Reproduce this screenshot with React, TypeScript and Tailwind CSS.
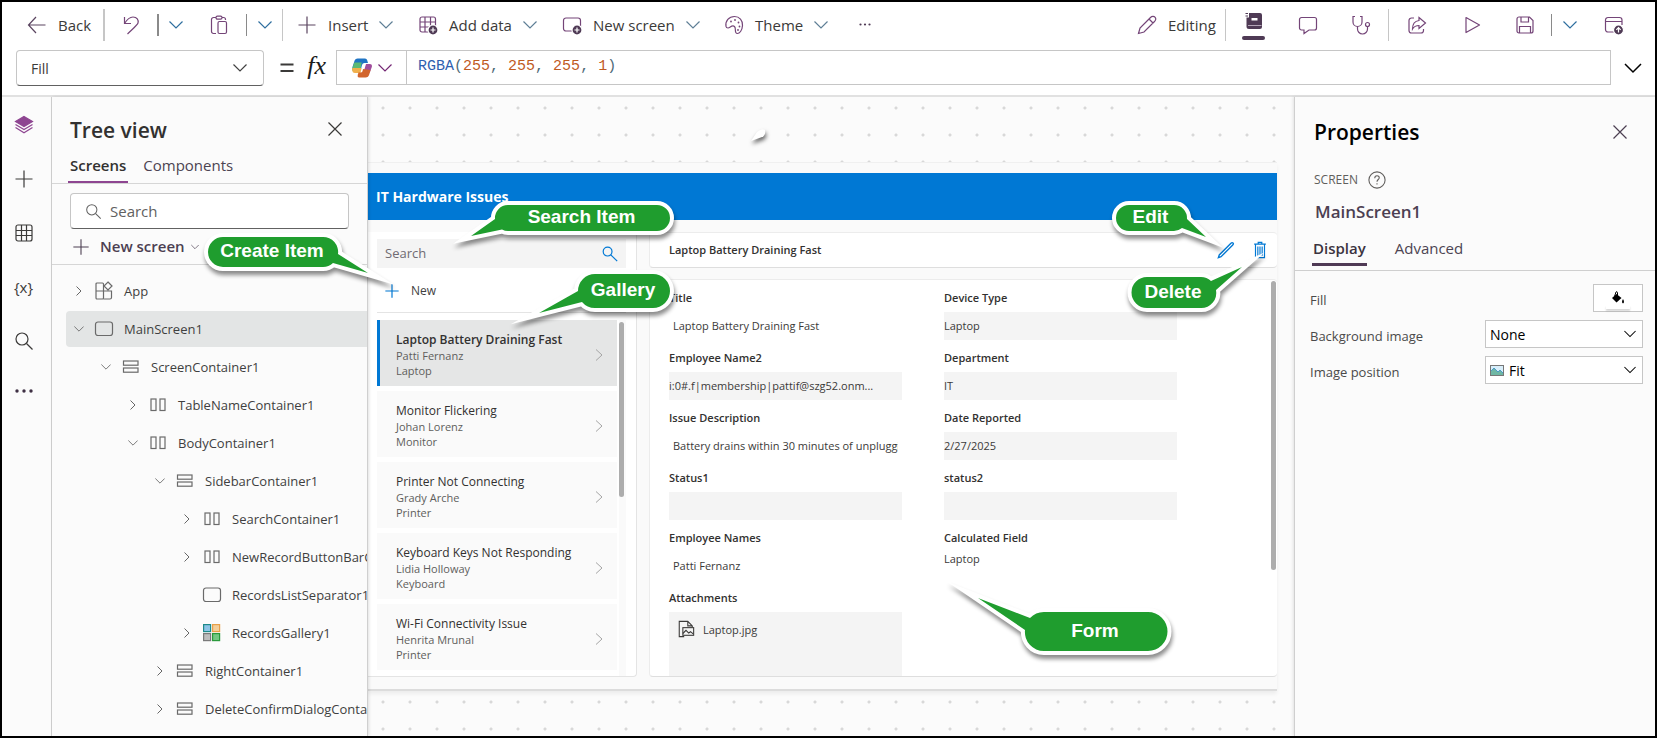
import type { ReactNode } from "react";

type IconProps = { children: ReactNode; className?: string; box?: string };

function Icon({ children, className = "size-5", box = "0 0 20 20" }: IconProps) {
  return (
    <svg viewBox={box} className={`shrink-0 ${className}`} fill="none" stroke="currentColor" strokeWidth="1.2" aria-hidden="true">
      {children}
    </svg>
  );
}

function ChevronDown({ className = "size-3.5" }: { className?: string }) {
  return (
    <Icon box="0 0 14 14" className={className}>
      <path d="M0.500 3.500L7 10L13.500 3.500" />
    </Icon>
  );
}

const plus = <path d="M10 1.500V18.500M1.500 10H18.500" />;
const close = <path d="M3.500 3.500L16.500 16.500M16.500 3.500L3.500 16.500" />;
const magnifier = (
  <>
    <circle cx="8" cy="8" r="6" />
    <path d="M12.500 12.500L18.500 18.500" />
  </>
);

function Separator({ className }: { className: string }) {
  return <span className={`shrink-0 ${className}`} />;
}

function CommandButton({ label, icon, className }: { label: string; icon: ReactNode; className: string }) {
  return (
    <button className={`flex h-full shrink-0 items-center gap-[11px] whitespace-nowrap px-3.5 ${className}`}>
      <span className="text-[#744578]">{icon}</span>
      {label}
      <ChevronDown className="ml-auto size-3.5 text-[#5f7f96]" />
    </button>
  );
}

function IconButton({ label, children, className }: { label: string; children: ReactNode; className: string }) {
  return (
    <button aria-label={label} className={`flex h-full shrink-0 items-center justify-center text-[#744578] ${className}`}>
      {children}
    </button>
  );
}

function Toolbar() {
  return (
    <header className="flex h-12 shrink-0 items-center pb-0.5 text-[15px] text-[#3b3a39]">
      <button className="flex h-full w-[101px] shrink-0 items-center gap-[11px] pl-[25px]">
        <Icon className="size-5 text-[#5b4560]">
          <path d="M18.500 10H1.500M9 2L1.500 10L9 18" />
        </Icon>
        Back
      </button>
      <Separator className="h-8 w-0.5 bg-[#c6c6c6]" />
      <IconButton label="Undo" className="w-[52px]">
        <Icon>
          <path d="M3.500 2V8.500H10M3.500 8.500C6 4.500 8.500 2 12 2C16 2 17.800 5 17 8C16.500 10 11 14.500 6.500 19" />
        </Icon>
      </IconButton>
      <Separator className="h-[22px] w-0.5 bg-[#8a8a8a]" />
      <IconButton label="Undo options" className="w-[33px]">
        <ChevronDown className="size-3.5 text-[#2f6f9f]" />
      </IconButton>
      <IconButton label="Paste" className="w-[54px]">
        <Icon>
          <path d="M7 18.500H4.500A2 2 0 0 1 2.500 16.500V4.500A2 2 0 0 1 4.500 2.500H7M13 2.500H14.500A2 2 0 0 1 16.500 4.500V5" />
          <rect x="7" y="1.200" width="6" height="3" rx="1.400" />
          <rect x="9" y="6.500" width="8.500" height="12" rx="1.500" />
        </Icon>
      </IconButton>
      <Separator className="h-[22px] w-px bg-[#8a8a8a]" />
      <IconButton label="Paste options" className="w-[35px]">
        <ChevronDown className="size-3.5 text-[#2f6f9f]" />
      </IconButton>
      <Separator className="h-8 w-px bg-[#c6c6c6]" />
      <CommandButton label="Insert" className="w-[119px]" icon={<Icon className="size-5 text-[#5b4560]">{plus}</Icon>} />
      <CommandButton
        label="Add data"
        className="ml-0.5 w-[142px]"
        icon={
          <Icon>
            <rect x="2" y="2" width="15.500" height="15" rx="2" />
            <path d="M7 2V17M12.500 2V17M2 7H17.500M2 12H17.500" />
            <circle cx="15" cy="15" r="5" fill="#4f3a55" stroke="#fff" />
            <path d="M15 12.500V17.500M12.500 15H17.500" stroke="#fff" />
          </Icon>
        }
      />
      <CommandButton
        label="New screen"
        className="ml-0.5 w-[158px]"
        icon={
          <Icon>
            <rect x="1.500" y="3" width="17" height="13" rx="2.500" />
            <circle cx="15" cy="15" r="5" fill="#4f3a55" stroke="#fff" />
            <path d="M15 12.500V17.500M12.500 15H17.500" stroke="#fff" />
          </Icon>
        }
      />
      <CommandButton
        label="Theme"
        className="ml-1 w-[127px]"
        icon={
          <Icon>
            <path d="M2 11.500C1 6 5 1.500 10.500 1.500C15.500 1.500 18.800 5.500 18.500 10.500C18.200 15.500 15.500 18.800 13 18.500C10 18 12.500 13.500 10.500 11.500C8 9.500 6 13 4 13C3 13 2.200 12.500 2 11.500Z" />
            <g fill="currentColor" stroke="none">
              <circle cx="7" cy="6.500" r="0.900" />
              <circle cx="11" cy="5" r="0.900" />
              <circle cx="14.500" cy="7.500" r="0.900" />
              <circle cx="15.500" cy="11.500" r="0.900" />
              <circle cx="14" cy="15" r="0.900" />
            </g>
          </Icon>
        }
      />
      <IconButton label="More commands" className="w-14">
        <Icon>
          <g fill="#4f3a55" stroke="none">
            <circle cx="5.500" cy="9.500" r="1.100" />
            <circle cx="10" cy="9.500" r="1.100" />
            <circle cx="14.500" cy="9.500" r="1.100" />
          </g>
        </Icon>
      </IconButton>

      <button className="ml-auto flex h-full w-[102px] shrink-0 items-center gap-[11px] pl-3.5">
        <Icon className="size-5 text-[#744578]">
          <path d="M1.500 18.500L3 13L13.500 2.500C15 1 17 1 18 2.200C19.200 3.300 19 5 17.500 6.500L7 17L1.500 18.500ZM12 4L16 8" />
        </Icon>
        Editing
      </button>
      <Separator className="h-8 w-px bg-[#c6c6c6]" />
      <IconButton label="Properties pane" className="w-[55px]">
        <span className="flex flex-col items-center gap-[5px]">
          <Icon>
            <path d="M5 2H16A2 2 0 0 1 18 4V16A2 2 0 0 1 16 18H5A2.500 2.500 0 0 1 2.500 15.500V6.500H5Z" fill="#4f3a55" stroke="none" />
            <path d="M1.500 2.500H4M1.500 5H4" stroke="#4f3a55" />
            <rect x="7.500" y="7" width="6" height="2.500" fill="#fff" stroke="none" />
            <path d="M4 14.500H17.500" stroke="#cdbfd0" strokeWidth="0.800" />
          </Icon>
          <span className="h-1 w-[23px] rounded-full bg-[#4f3a55]" />
        </span>
      </IconButton>
      <IconButton label="Comments" className="w-[53px]">
        <Icon>
          <path d="M3.500 2.500H16.500A2 2 0 0 1 18.500 4.500V13A2 2 0 0 1 16.500 15H11L6 18.500V15H3.500A2 2 0 0 1 1.500 13V4.500A2 2 0 0 1 3.500 2.500Z" />
        </Icon>
      </IconButton>
      <IconButton label="App checker" className="w-[54px]">
        <Icon>
          <path d="M4 1.500H2V7A4.500 4.500 0 0 0 11 7V1.500H9M6.500 11.500V14A5 5 0 0 0 16.500 14V11.500" />
          <circle cx="16.500" cy="9.500" r="2" />
        </Icon>
      </IconButton>
      <Separator className="h-8 w-px bg-[#c6c6c6]" />
      <IconButton label="Share" className="w-[55px]">
        <Icon>
          <path d="M7 3H4.500A2.500 2.500 0 0 0 2 5.500V15.500A2.500 2.500 0 0 0 4.500 18H14A2.500 2.500 0 0 0 16.500 15.500V14" />
          <path d="M12 2.500L18.500 8L12 13.500V10.500C9 10.500 7 11.500 5.500 14C5.500 9 8 6 12 5.500Z" />
        </Icon>
      </IconButton>
      <IconButton label="Preview" className="w-[55px]">
        <Icon>
          <path d="M4 2.500L17.500 10L4 17.500Z" strokeLinejoin="round" />
        </Icon>
      </IconButton>
      <IconButton label="Save" className="w-[52px]">
        <Icon>
          <path d="M4 2H14.500L18 5.500V16A2 2 0 0 1 16 18H4A2 2 0 0 1 2 16V4A2 2 0 0 1 4 2ZM6 2V7H13.500V2M4.500 18V11.500H15.500V18" />
        </Icon>
      </IconButton>
      <Separator className="h-[22px] w-px bg-[#8a8a8a]" />
      <IconButton label="Save options" className="w-9">
        <ChevronDown className="size-3.5 text-[#2f6f9f]" />
      </IconButton>
      <IconButton label="Publish" className="mr-[15px] w-[52px]">
        <Icon>
          <path d="M10 17H4A2.500 2.500 0 0 1 1.500 14.500V5A2.500 2.500 0 0 1 4 2.500H15.500A2.500 2.500 0 0 1 18 5V10M1.500 6.500H18" />
          <circle cx="14.500" cy="15" r="5" fill="#4f3a55" stroke="#fff" />
          <path d="M14.500 17.500V12.700M12.300 14.800L14.500 12.600L16.700 14.800" stroke="#fff" />
        </Icon>
      </IconButton>
    </header>
  );
}

function FormulaBar() {
  return (
    <div className="flex h-[47px] shrink-0 items-start border-b-2 border-[#e1e1e1] pl-3.5">
      <div className="grid h-9 w-[248px] shrink-0 items-center rounded-[4px] border border-[#c6c6c6] border-b-[#616161]">
        <select aria-label="Property" className="col-start-1 row-start-1 h-full w-full appearance-none bg-transparent px-3.5 text-[14px] text-[#3b3a39]">
          <option>Fill</option>
        </select>
        <ChevronDown className="pointer-events-none col-start-1 row-start-1 mr-4 size-3.5 justify-self-end text-[#424242]" />
      </div>
      <span className="flex h-9 w-[72px] shrink-0 items-center justify-between pl-4 pr-2.5">
        <svg viewBox="0 0 14 10" className="h-2.5 w-3.5" aria-hidden="true">
          <path d="M0.500 1.500H13.500M0.500 8H13.500" stroke="#3b3a39" strokeWidth="2" />
        </svg>
        <i className="pb-1 font-['Liberation_Serif',serif] text-[26px] leading-6 text-[#1b1b1b]">fx</i>
      </span>
      <div className="flex h-[35px] min-w-0 flex-1 items-center border border-[#c6c6c6]">
        <button aria-label="Copilot" className="flex h-full w-[70px] shrink-0 items-center justify-center gap-1.5 border-r border-[#c6c6c6]">
          <svg viewBox="0 0 20 20" className="size-5" aria-hidden="true">
            <path d="M5.500 0.500H13Q14.800 0.500 15.300 2.500L16 5H12.500Q10.500 5 10 7L9 11H1Q0 11 0.500 9L2.600 2.500Q3.500 0.500 5.500 0.500Z" fill="#1f74c4" />
            <path d="M2.300 4.500H9.700L8 13.500H2Q-0.300 13.500 0.300 10.500Z" fill="#5bb974" />
            <path d="M0.300 10H9.500L8.500 15H3Q-0.300 15 0.300 10Z" fill="#f0b04c" />
            <path d="M14 6H18Q20.500 6 19.800 9L18 14Q17 16 15 16H11Z" fill="#a04d9c" />
            <path d="M11 11L18.500 12L17.400 16Q16.500 19.500 13.500 19.500H7Q5.200 19.500 5.700 17L6.500 14.500H9Q10.500 14.500 11 11Z" fill="#d2652c" />
          </svg>
          <ChevronDown className="size-3.5 text-[#742774]" />
        </button>
        <code className="px-[11px] font-['Liberation_Mono',monospace] text-[15px] text-[#4f6b78]">
          <span className="text-[#2f5fb0]">RGBA</span>(<span className="text-[#bf5a1f]">255</span>, <span className="text-[#bf5a1f]">255</span>,{" "}
          <span className="text-[#bf5a1f]">255</span>, <span className="text-[#bf5a1f]">1</span>)
        </code>
      </div>
      <button aria-label="Expand formula bar" className="flex h-9 w-11 shrink-0 items-center justify-center text-black">
        <Icon box="0 0 18 14" className="h-3.5 w-[18px]">
          <path d="M1 3L9 11L17 3" strokeWidth="1.500" />
        </Icon>
      </button>
    </div>
  );
}

function Rail() {
  return (
    <nav className="flex w-[50px] shrink-0 flex-col items-center gap-[34px] border-r border-[#d1d1d1] pr-1.5 pt-[18px] text-[#3b3a39]">
      <button aria-label="Tree view">
        <Icon>
          <path d="M10 1.500L18.500 6.500L10 11.500L1.500 6.500Z" fill="#8e4591" stroke="#8e4591" />
          <path d="M1.500 9.500L10 14.500L18.500 9.500M1.500 12.500L10 17.800L18.500 12.500" stroke="#8e4591" />
        </Icon>
      </button>
      <button aria-label="Insert">
        <Icon>{plus}</Icon>
      </button>
      <button aria-label="Data">
        <Icon>
          <rect x="2" y="2" width="16" height="16" rx="2" />
          <path d="M7.500 2V18M12.500 2V18M2 7.500H18M2 12.500H18" />
        </Icon>
      </button>
      <button aria-label="Variables" className="h-5 text-[15px] leading-4">
        {"{x}"}
      </button>
      <button aria-label="Search">
        <Icon>{magnifier}</Icon>
      </button>
      <button aria-label="More">
        <Icon>
          <g fill="#3f3044" stroke="none">
            <circle cx="3" cy="6" r="1.700" />
            <circle cx="10" cy="6" r="1.700" />
            <circle cx="17" cy="6" r="1.700" />
          </g>
        </Icon>
      </button>
    </nav>
  );
}

type NodeIcon = "app" | "screen" | "vertical" | "horizontal" | "gallery";

const nodeIcons: Record<NodeIcon, ReactNode> = {
  app: (
    <>
      <rect x="2" y="2" width="7.500" height="16" rx="1" />
      <path d="M2 10H17.500V16.500A1.500 1.500 0 0 1 16 18H9.500M14 1L18 5L14 9L10 5Z" />
    </>
  ),
  screen: <rect x="1.500" y="3" width="17" height="13.500" rx="2.500" />,
  vertical: (
    <>
      <rect x="2.500" y="4" width="14.500" height="4.200" />
      <rect x="2.500" y="11" width="14.500" height="4.200" />
    </>
  ),
  horizontal: (
    <>
      <rect x="3" y="4" width="5" height="11.500" />
      <rect x="12" y="4" width="5" height="11.500" />
    </>
  ),
  gallery: (
    <>
      <rect x="1.600" y="1.600" width="7" height="7" fill="#8cc4e6" stroke="#1e8a8a" />
      <rect x="10.600" y="1.600" width="7" height="7" fill="#f3cf9b" stroke="#e8a049" />
      <rect x="1.600" y="10.600" width="7" height="7" fill="#bdbdbd" stroke="#7a7a7a" />
      <rect x="10.600" y="10.600" width="7" height="7" fill="#74c783" stroke="#2a9a3c" />
    </>
  ),
};

type TreeNode = { name: string; icon: NodeIcon; indent: string; state: "open" | "closed" | "leaf"; selected?: boolean };

const nodes: TreeNode[] = [
  { name: "App", icon: "app", indent: "pl-1.5", state: "closed" },
  { name: "MainScreen1", icon: "screen", indent: "pl-1.5", state: "open", selected: true },
  { name: "ScreenContainer1", icon: "vertical", indent: "pl-[33px]", state: "open" },
  { name: "TableNameContainer1", icon: "horizontal", indent: "pl-[60px]", state: "closed" },
  { name: "BodyContainer1", icon: "horizontal", indent: "pl-[60px]", state: "open" },
  { name: "SidebarContainer1", icon: "vertical", indent: "pl-[87px]", state: "open" },
  { name: "SearchContainer1", icon: "horizontal", indent: "pl-[114px]", state: "closed" },
  { name: "NewRecordButtonBarContainer1", icon: "horizontal", indent: "pl-[114px]", state: "closed" },
  { name: "RecordsListSeparator1", icon: "screen", indent: "pl-[114px]", state: "leaf" },
  { name: "RecordsGallery1", icon: "gallery", indent: "pl-[114px]", state: "closed" },
  { name: "RightContainer1", icon: "vertical", indent: "pl-[87px]", state: "closed" },
  { name: "DeleteConfirmDialogContainer1", icon: "vertical", indent: "pl-[87px]", state: "closed" },
];

function TreeView() {
  return (
    <aside className="z-10 flex w-[316px] shrink-0 flex-col overflow-hidden border-r border-[#cfcfcf] bg-[#fbfbfb] shadow-[1px_0_3px_rgba(0,0,0,0.12)]">
      <div className="flex h-[54px] items-end justify-between pb-1.5 pl-[18px] pr-[22px]">
        <h2 className="text-[21px] font-semibold leading-[30px] text-[#323130]">Tree view</h2>
        <button aria-label="Close tree view" className="mb-1.5 text-[#3b3a39]">
          <Icon>{close}</Icon>
        </button>
      </div>
      <div className="flex h-[33px] items-stretch gap-[15px] border-b border-[#d6d6d6] pl-4 text-[15px] text-[#4c4452]">
        <button className="border-b-2 border-[#8e4591] px-0.5 pb-0.5 font-semibold text-[#323130]">Screens</button>
        <button className="border-b-2 border-transparent pb-0.5">Components</button>
      </div>
      <label className="mx-[18px] mt-[9px] flex h-9 items-center gap-2 rounded-[4px] border border-[#c6c6c6] border-b-[#616161] bg-white px-3.5 text-[#616161]">
        <Icon className="size-[17px]">{magnifier}</Icon>
        <input placeholder="Search" aria-label="Search the tree" className="min-w-0 flex-1 bg-transparent text-[15px] placeholder:text-[#616161]" />
      </label>
      <div className="flex h-9 items-center border-b border-[#d6d6d6] pl-5">
        <button className="flex items-center gap-2.5 text-[15px] font-semibold text-[#4c3f52]">
          <Icon className="size-[18px]">{plus}</Icon>
          New screen
          <ChevronDown className="-ml-1 size-2" />
        </button>
      </div>
      <ul className="flex flex-col gap-0.5 pl-3.5 pt-2 text-[13px] text-[#3f3f3f]">
        {nodes.map((node) => (
          <li key={node.name} className={`flex h-9 items-center rounded-l-[4px] ${node.indent} ${node.selected ? "bg-[#e3e5e5]" : ""}`}>
            <span className="flex w-3.5 shrink-0 justify-center text-[#666]">
              {node.state === "open" && <ChevronDown className="size-2.5" />}
              {node.state === "closed" && (
                <Icon box="0 0 14 14" className="size-3.5">
                  <path d="M4.500 2.500L9 7L4.500 11.500" strokeWidth="1" />
                </Icon>
              )}
            </span>
            <Icon className="ml-2 size-5 text-[#6a6a6a]">{nodeIcons[node.icon]}</Icon>
            <span className="ml-2.5 whitespace-nowrap pt-0.5">{node.name}</span>
          </li>
        ))}
      </ul>
    </aside>
  );
}

const issues = [
  { title: "Laptop Battery Draining Fast", person: "Patti Fernanz", device: "Laptop" },
  { title: "Monitor Flickering", person: "Johan Lorenz", device: "Monitor" },
  { title: "Printer Not Connecting", person: "Grady Arche", device: "Printer" },
  { title: "Keyboard Keys Not Responding", person: "Lidia Holloway", device: "Keyboard" },
  { title: "Wi-Fi Connectivity Issue", person: "Henrita Mrunal", device: "Printer" },
];

function Sidebar() {
  return (
    <section className="flex w-[269px] shrink-0 flex-col rounded-r-[4px] border-b border-r border-[#e4e4e4] bg-white pl-[9px] pr-2.5 pt-[7px]">
      <label className="flex h-[29px] shrink-0 items-center bg-[#f4f4f4] px-2 text-[#0078d4]">
        <input placeholder="Search" aria-label="Search records" className="min-w-0 flex-1 bg-transparent text-[13px] placeholder:text-[#706b72]" />
        <Icon className="size-4">
          <circle cx="7" cy="7" r="5.500" strokeWidth="1.500" />
          <path d="M11 11L19 19" strokeWidth="1.500" />
        </Icon>
      </label>
      <button className="flex h-[45px] shrink-0 items-center gap-3 border-b border-[#e4e4e4] pl-2 pt-px text-[12px] text-[#3f3f3f]">
        <Icon className="size-3.5 text-[#0078d4]">
          <path d="M10 0.500V19.500M0.500 10H19.500" strokeWidth="1.700" />
        </Icon>
        New
      </button>
      <div className="mt-[7px] flex min-h-0 flex-1 gap-0.5 overflow-hidden">
        <ul className="flex flex-1 flex-col gap-[5px]">
          {issues.map((issue, index) => (
            <li
              key={issue.title}
              className={`flex h-[66px] shrink-0 items-center border-l-[3px] pl-4 pr-2.5 pt-1 ${
                index === 0 ? "border-[#0078d4] bg-[#e5e6e6]" : "border-[#fafafa] bg-[#fafafa]"
              }`}
            >
              <div className="flex-1 text-[11px] leading-[15px] text-[#605e5c]">
                <p className={`whitespace-nowrap text-[12px] leading-4 text-[#323130] ${index === 0 ? "font-semibold" : ""}`}>{issue.title}</p>
                <p>{issue.person}</p>
                <p>{issue.device}</p>
              </div>
              <Icon box="0 0 16 16" className="size-4 text-[#a5a5a5]">
                <path d="M5 2.500L11 8L5 13.500" strokeWidth="1" />
              </Icon>
            </li>
          ))}
        </ul>
        <div className="w-[7px] bg-[#fafafa] pt-0.5">
          <div className="h-[175px] w-[5px] rounded-full bg-[#adadad]" />
        </div>
      </div>
    </section>
  );
}

type Field = { label: string; value: string; editable?: boolean };

const leftFields: Field[] = [
  { label: "Title", value: "Laptop Battery Draining Fast", editable: true },
  { label: "Employee Name2", value: "i:0#.f|membership|pattif@szg52.onm..." },
  { label: "Issue Description", value: "Battery drains within 30 minutes of unplugging", editable: true },
  { label: "Status1", value: "" },
  { label: "Employee Names", value: "Patti Fernanz", editable: true },
];

const rightFields: Field[] = [
  { label: "Device Type", value: "Laptop" },
  { label: "Department", value: "IT" },
  { label: "Date Reported", value: "2/27/2025" },
  { label: "status2", value: "" },
];

function FormField({ label, value, editable }: Field) {
  return (
    <label className="mb-2 flex flex-col gap-1 text-[11px] text-[#3b3a39]">
      <span className="h-5 font-semibold leading-5 text-[#323130]">{label}</span>
      <span className={`flex h-7 ${editable ? "px-1" : "bg-[#f4f4f4]"}`}>
        <input readOnly defaultValue={value} className="min-w-0 flex-1 bg-transparent" />
      </span>
    </label>
  );
}

function Detail() {
  return (
    <section className="flex min-w-0 flex-1 flex-col gap-[11px]">
      <div className="flex h-9 shrink-0 items-center rounded-[4px] border border-r-0 border-[#ececec] border-b-[#dedede] bg-white pl-[19px] pr-2">
        <h3 className="flex-1 text-[11px] font-semibold text-[#323130]">Laptop Battery Draining Fast</h3>
        <button aria-label="Edit" className="mr-4 text-[#0078d4]">
          <Icon className="size-[18px]">
            <path d="M1.500 18.500L2.500 15.500L15.500 2.500C16.300 1.700 17 1.500 17.800 2.200C18.500 3 18.300 3.700 17.500 4.500L4.500 17.500Z" strokeWidth="1.500" />
          </Icon>
        </button>
        <button aria-label="Delete" className="text-[#0078d4]">
          <Icon className="size-[18px]">
            <path d="M3.500 3.500H16.500M8 3.500V1.500H12V3.500M5 3.500V18.500H15V3.500M7.600 6V16.500M10 6V16.500M12.400 6V16.500" strokeWidth="1.300" />
          </Icon>
        </button>
      </div>
      <div className="flex min-h-0 flex-1 overflow-hidden rounded-[4px] border border-r-0 border-[#ececec] border-b-[#dedede] bg-white pl-[19px]">
        <div className="mr-[42px] w-[233px] shrink-0 pt-2">
          {leftFields.map((field) => (
            <FormField key={field.label} {...field} />
          ))}
          <div className="text-[11px] text-[#3b3a39]">
            <p className="mb-1 h-5 font-semibold leading-5 text-[#323130]">Attachments</p>
            <div className="flex h-20 items-start gap-2 bg-[#f4f4f4] px-2 pt-2 leading-5">
              <Icon className="size-[18px] text-[#3b3a39]">
                <path d="M8 18.500H2.500V1.500H12L17 6.500V8M12 1.500V6.500H17" />
                <rect x="6.500" y="8.500" width="12" height="8.500" />
                <path d="M6.500 15L10 11.500L13 14.500L15 13L18 15.500" />
              </Icon>
              Laptop.jpg
            </div>
          </div>
        </div>
        <div className="w-[233px] shrink-0 pt-2">
          {rightFields.map((field) => (
            <FormField key={field.label} {...field} />
          ))}
          <div className="text-[11px] text-[#3b3a39]">
            <p className="h-5 font-semibold leading-5 text-[#323130]">Calculated Field</p>
            <p className="leading-[22px]">Laptop</p>
          </div>
        </div>
        <div className="ml-auto mr-px mt-px h-[289px] w-[5px] rounded-full bg-[#adadad]" />
      </div>
    </section>
  );
}

function Callout({ text, className, path }: { text: string; className: string; path: string }) {
  return (
    <div className={`pointer-events-none absolute z-20 flex items-center justify-center ${className}`}>
      <svg className="absolute inset-0 h-full w-full overflow-visible drop-shadow-[1px_4px_2px_rgba(0,0,0,0.45)]" aria-hidden="true">
        <path d={path} fill="#1f9d2e" stroke="#fff" strokeWidth="8" strokeMiterlimit="20" style={{ paintOrder: "stroke" }} />
      </svg>
      <span className="relative whitespace-nowrap pb-0.5 pr-0.5 font-['Liberation_Sans',sans-serif] text-[19px] font-bold leading-5 text-white">
        {text}
      </span>
    </div>
  );
}

function Canvas() {
  return (
    <main className="relative flex min-w-0 flex-1 flex-col bg-[#fbfbfb] pr-[17px]">
      <div className="flex flex-1 flex-col bg-[radial-gradient(circle_at_15px_11px,#d8d8d8_1px,transparent_2px)] bg-[length:27px_27px]">
        <div className="mt-[65px] flex h-[529px] flex-col border-b-2 border-t border-t-[#f0f0f0] border-b-[#dcdcdc] bg-[#fafafa] pb-3 pt-2.5 shadow-[0_3px_4px_rgba(0,0,0,0.06)]">
          <h1 className="flex h-[47px] shrink-0 items-center bg-[#0078d4] px-2 text-[14px] font-bold text-white">IT Hardware Issues</h1>
          <div className="mt-3 flex min-h-0 flex-1 gap-3">
            <Sidebar />
            <Detail />
          </div>
        </div>
      </div>
      <svg viewBox="0 0 14 12" className="absolute left-96 top-[33px] h-3 w-3.5 overflow-visible drop-shadow-[1px_3px_2px_rgba(0,0,0,0.6)]" aria-hidden="true">
        <path d="M-1 11L5 2Q10 -2 13 0Q14 5 10 7Z" fill="#fff" />
      </svg>
      <Callout text="Search Item" className="left-[127px] top-[108px] h-[26px] w-[175px]" path="M13 0H162A13 13 0 0 1 162 26H13Q10 26 7 24.500L-24 31L0 14A13 13 0 0 1 13 0Z" />
      <Callout text="Gallery" className="left-[210px] top-[177px] h-[34px] w-[92px]" path="M17 0H75A17 17 0 0 1 75 34H17A17 17 0 0 1 4 28L-39 39L0 17A17 17 0 0 1 17 0Z" />
      <Callout text="Create Item" className="-left-40 top-[140px] h-[30px] w-[130px]" path="M15 0H115A15 15 0 0 1 130 17L160 36L125 26A15 15 0 0 1 115 30H15A15 15 0 0 1 15 0Z" />
      <Callout text="Edit" className="right-[107px] top-[108px] h-[26px] w-[71px]" path="M13 0H58A13 13 0 0 1 71 14L90 32L66 23A13 13 0 0 1 58 26H13A13 13 0 0 1 13 0Z" />
      <Callout text="Delete" className="right-[78px] top-[180px] h-[31px] w-[84px]" path="M15 0H69A15 15 0 0 1 79 4L110 -10L84 13A15 15 0 0 1 69 31H15A15 15 0 0 1 15 0Z" />
      <Callout text="Form" className="left-[657px] top-[515px] h-[39px] w-[142px]" path="M19 0H123A19 19 0 0 1 123 39H19A19 19 0 0 1 0 18L-47 -14L5 6A19 19 0 0 1 19 0Z" />
    </main>
  );
}

function Properties() {
  return (
    <aside className="z-10 w-[361px] shrink-0 border-l border-[#cfcfcf] bg-[#fbfbfb] shadow-[-1px_0_3px_rgba(0,0,0,0.10)]">
      <div className="flex h-[69px] items-center justify-between pl-[19px] pr-[25px]">
        <h2 className="text-[21px] font-semibold leading-[30px] text-black">Properties</h2>
        <button aria-label="Close properties" className="text-[#4c3f52]">
          <Icon>{close}</Icon>
        </button>
      </div>
      <div className="flex h-7 items-center gap-2.5 pl-[19px] text-[12px] text-[#605e5c]">
        SCREEN
        <Icon className="size-[18px]">
          <circle cx="10" cy="10" r="9" />
          <path d="M7.500 8C7.500 4.500 12.500 4.500 12.500 7.500C12.500 9.500 10 9.500 10 12M10 13.500V15" />
        </Icon>
      </div>
      <p className="flex h-9 items-center pl-5 text-[17px] font-semibold text-[#4c3f52]">MainScreen1</p>
      <div className="flex h-[41px] items-start gap-7 border-b border-[#cfcfcf] pl-[17px] text-[15px] text-[#4c4452]">
        <button className="h-9 border-b-[3px] border-[#4f3a55] px-px pt-1 font-semibold text-[#3b3340]">Display</button>
        <button className="h-9 border-b-[3px] border-transparent pt-1">Advanced</button>
      </div>
      <div className="flex flex-col gap-2 pl-[15px] pr-3 pt-[13px] text-[13px] text-[#4a4a4a]">
        <div className="flex h-7 items-center justify-between">
          <span className="pt-1.5">Fill</span>
          <button aria-label="Fill color" className="flex h-7 w-[50px] flex-col items-center justify-center border border-[#c6c6c6] bg-white">
            <svg viewBox="0 0 14 14" className="mt-1 size-3.5" aria-hidden="true">
              <path d="M3.500 5.500L5 1Q6 0 6.500 1.500L6.500 5" stroke="#000" fill="none" />
              <path d="M1 7L5.500 3L10.500 7L5.500 11.500Z" fill="#000" />
              <path d="M12 8Q14 11.500 12 12.500Q10 11.500 12 8Z" fill="#000" />
            </svg>
            <span className="mb-px h-1 w-6 bg-white shadow-[0_2px_2px_rgba(0,0,0,0.16)]" />
          </button>
        </div>
        <div className="flex h-7 items-center justify-between">
          <label htmlFor="background-image" className="pt-1.5">
            Background image
          </label>
          <div className="grid h-7 w-[158px] items-center border border-[#c6c6c6] bg-white">
            <select id="background-image" className="col-start-1 row-start-1 h-full w-full appearance-none bg-transparent px-1 text-[14px] text-black">
              <option>None</option>
            </select>
            <ChevronDown className="pointer-events-none col-start-1 row-start-1 mr-1.5 size-3 justify-self-end text-black" />
          </div>
        </div>
        <div className="flex h-7 items-center justify-between">
          <label htmlFor="image-position" className="pt-1.5">
            Image position
          </label>
          <div className="grid h-7 w-[158px] items-center border border-[#c6c6c6] bg-white">
            <svg viewBox="0 0 14 11" className="pointer-events-none col-start-1 row-start-1 ml-1 h-[11px] w-3.5" aria-hidden="true">
              <rect x="0.500" y="0.500" width="13" height="10" fill="#d9effb" stroke="#777" />
              <path d="M1 10V6L4 3L8 7L10 5L13 8V10Z" fill="#6fb7a4" />
              <path d="M1 6L4 3L8 7L10 5L13 8" fill="none" stroke="#4b9ac9" />
            </svg>
            <select id="image-position" className="col-start-1 row-start-1 h-full w-full appearance-none bg-transparent pl-[23px] text-[14px] text-black">
              <option>Fit</option>
            </select>
            <ChevronDown className="pointer-events-none col-start-1 row-start-1 mr-1.5 size-3 justify-self-end text-black" />
          </div>
        </div>
      </div>
    </aside>
  );
}

export default function App() {
  return (
    <div className="flex h-screen flex-col overflow-hidden border-2 border-black bg-white font-['Open_Sans','Noto_Sans',sans-serif]">
      <Toolbar />
      <FormulaBar />
      <div className="flex min-h-0 flex-1 bg-[#fbfbfb]">
        <Rail />
        <TreeView />
        <Canvas />
        <Properties />
      </div>
    </div>
  );
}
